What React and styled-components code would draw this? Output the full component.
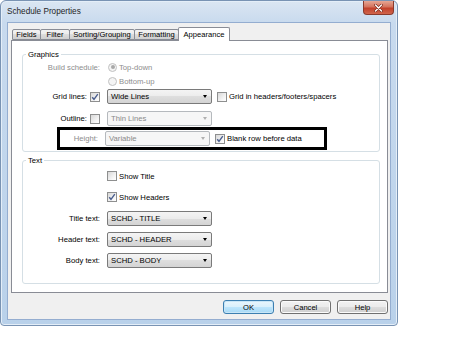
import React from 'react';
import styled, { createGlobalStyle } from 'styled-components';

const GlobalStyle = createGlobalStyle`
  html, body { margin: 0; padding: 0; background: #fff; }
  body {
    font-family: "Liberation Sans", Arial, sans-serif;
    font-size: 7.7px;
    color: #000;
  }
`;

const Window = styled.div`
  width: 398px;
  height: 326px;
  box-sizing: border-box;
  border: 1px solid #7993b3;
  border-radius: 6px 6px 4px 4px;
  background: linear-gradient(#dbe6f2, #c8daee 22px, #b9d1ea);
  box-shadow: inset 0 0 0 1px #e4eef8;
  display: flex;
  flex-direction: column;
  padding: 0 6px 5px 6px;
`;

const TitleBar = styled.div`
  height: 21px;
  display: flex;
  align-items: flex-start;
  justify-content: space-between;
`;

const Title = styled.span`
  font-size: 8.2px;
  line-height: 21px;
  color: #1e1e1e;
`;

const CloseButton = styled.div`
  width: 31px;
  height: 14px;
  margin-right: -3px;
  box-sizing: border-box;
  border: 1px solid #8a3a2c;
  border-top: none;
  border-radius: 0 0 4px 4px;
  background: linear-gradient(#e6a795, #d4735d 45%, #c2412b 55%, #d0654c);
  display: flex;
  align-items: center;
  justify-content: center;
`;

const Client = styled.div`
  flex: 1;
  background: #f0f0f0;
  border: 1px solid #94add0;
  display: flex;
  flex-direction: column;
  padding: 4px 2px 0 3px;
`;

const TabStrip = styled.div`
  display: flex;
  align-items: flex-end;
  padding-left: 1px;
  height: 13px;
  position: relative;
  z-index: 1;
`;

const Tab = styled.div`
  width: ${p => p.$w}px;
  height: ${p => (p.$active ? 14 : 11)}px;
  box-sizing: border-box;
  border: 1px solid #898c95;
  border-bottom: ${p => (p.$active ? 'none' : '1px solid #898c95')};
  border-radius: 2px 2px 0 0;
  margin-right: -1px;
  margin-bottom: ${p => (p.$active ? -1 : 0)}px;
  background: ${p => (p.$active ? '#fff' : 'linear-gradient(#f2f2f2, #ebebeb 50%, #dddddd 50%, #cfcfcf)')};
  display: flex;
  align-items: center;
  justify-content: center;
  font-size: 7.6px;
`;

const Panel = styled.div`
  height: 253px;
  box-sizing: border-box;
  background: #fff;
  border: 1px solid #898c95;
  padding: 9px 7px 0 10px;
`;

const Group = styled.fieldset`
  margin: ${p => p.$mt || 0}px 0 0 0;
  padding: 0 0 ${p => p.$pb}px 0;
  min-width: 0;
  border: 1px solid #d5dfe5;
  border-radius: 3px;
`;

const Legend = styled.legend`
  margin-left: 3px;
  padding: 0 2px;
  line-height: 9px;
  color: #000;
`;

const Row = styled.div`
  display: flex;
  align-items: center;
  height: ${p => p.$h || 17}px;
  margin-top: ${p => p.$mt || 0}px;
  gap: 5px;
`;

const Label = styled.div`
  width: ${p => p.$w || 77}px;
  margin-right: 2px;
  display: flex;
  justify-content: flex-end;
  align-items: center;
  gap: 3px;
  white-space: nowrap;
  color: ${p => (p.$disabled ? '#8d8d8d' : '#000')};
`;

const Highlight = styled.div`
  margin-left: 34px;
  width: 270px;
  box-sizing: border-box;
  border: 3px solid #000;
`;

const OptionText = styled.span`
  white-space: nowrap;
  color: ${p => (p.$disabled ? '#8d8d8d' : '#000')};
`;

const Option = styled.label`
  display: flex;
  align-items: center;
  gap: 2px;
  margin-left: ${p => p.$ml || 0}px;
`;

const Combo = styled.div`
  width: 105px;
  height: 15px;
  box-sizing: border-box;
  border: 1px solid ${p => (p.$disabled ? '#b5b9bd' : '#7a7a7a')};
  border-radius: 2px;
  background: ${p => (p.$disabled ? '#f6f6f6' : 'linear-gradient(#f4f4f4, #ececec 50%, #dedede 50%, #d4d4d4)')};
  display: flex;
  align-items: center;
  justify-content: space-between;
  padding: 0 4px 0 3px;
  color: ${p => (p.$disabled ? '#8a8a8a' : '#000')};
`;

const Arrow = styled.span`
  width: 0;
  height: 0;
  border-left: 2.5px solid transparent;
  border-right: 2.5px solid transparent;
  border-top: 3px solid ${p => (p.$disabled ? '#b0b0b0' : '#000')};
`;

const Box = styled.span`
  width: 10px;
  height: 10px;
  box-sizing: border-box;
  border: 1px solid #8e8f8f;
  background: linear-gradient(135deg, #d8d8d8, #f6f6f6 70%, #fff);
  display: inline-flex;
  align-items: center;
  justify-content: center;
  flex: none;
`;

const Radio = styled.span`
  width: 9px;
  height: 9px;
  box-sizing: border-box;
  border-radius: 50%;
  border: 1px solid #c1c1c1;
  background: #f4f4f4;
  display: inline-flex;
  align-items: center;
  justify-content: center;
  flex: none;
  &::after {
    content: '';
    width: 4px;
    height: 4px;
    border-radius: 50%;
    background: ${p => (p.$on ? '#a8a8a8' : 'transparent')};
  }
`;

const ButtonRow = styled.div`
  display: flex;
  justify-content: flex-end;
  gap: 6px;
  margin-top: 7px;
`;

const Button = styled.div`
  width: 51px;
  height: 14px;
  box-sizing: border-box;
  border: 1px solid ${p => (p.$default ? '#3c7fb1' : '#707070')};
  border-radius: 3px;
  background: ${p => (p.$default
    ? 'linear-gradient(#eaf6fd, #d9f0fc 50%, #bee6fd 50%, #a7d9f5)'
    : 'linear-gradient(#f2f2f2, #ebebeb 50%, #dddddd 50%, #cfcfcf)')};
  box-shadow: ${p => (p.$default ? 'inset 0 0 0 1px #c8e6f7' : 'inset 0 0 0 1px #fbfbfb')};
  display: flex;
  align-items: center;
  justify-content: center;
  font-size: 7.6px;
`;

function Check({ on }) {
  return (
    <Box>
      {on && (
        <svg width="8" height="8" viewBox="0 0 8 8">
          <path d="M1.2 4.2 L3 6.3 L6.8 1.2" fill="none" stroke="#4a5e8e" strokeWidth="1.4" />
        </svg>
      )}
    </Box>
  );
}

function Select({ value, disabled }) {
  return (
    <Combo $disabled={disabled}>
      <span>{value}</span>
      <Arrow $disabled={disabled} />
    </Combo>
  );
}

export default function App() {
  const tabs = [
    { name: 'Fields', w: 29 },
    { name: 'Filter', w: 30 },
    { name: 'Sorting/Grouping', w: 66 },
    { name: 'Formatting', w: 45 },
    { name: 'Appearance', w: 52, active: true },
  ];

  return (
    <>
      <GlobalStyle />
      <Window>
        <TitleBar>
          <Title>Schedule Properties</Title>
          <CloseButton>
            <svg width="9" height="8" viewBox="0 0 9 8">
              <path d="M1.5 1 L7.5 7 M7.5 1 L1.5 7" stroke="#7a2a1c" strokeWidth="2.6" strokeLinecap="round" />
              <path d="M1.5 1 L7.5 7 M7.5 1 L1.5 7" stroke="#fff" strokeWidth="1.4" strokeLinecap="round" />
            </svg>
          </CloseButton>
        </TitleBar>

        <Client>
          <TabStrip>
            {tabs.map(t => (
              <Tab key={t.name} $w={t.w} $active={t.active}>{t.name}</Tab>
            ))}
          </TabStrip>

          <Panel>
            <Group $pb={1}>
              <Legend>Graphics</Legend>
              <Row $h={14} style={{ marginTop: 1 }}>
                <Label $disabled>Build schedule:</Label>
                <Option $ml={1}><Radio $on /><OptionText $disabled>Top-down</OptionText></Option>
              </Row>
              <Row $h={14}>
                <Label />
                <Option $ml={1}><Radio /><OptionText $disabled>Bottom-up</OptionText></Option>
              </Row>
              <Row>
                <Label>Grid lines: <Check on /></Label>
                <Select value="Wide Lines" />
                <Option><Check /><OptionText>Grid in headers/footers/spacers</OptionText></Option>
              </Row>
              <Row $mt={5}>
                <Label>Outline: <Check /></Label>
                <Select value="Thin Lines" disabled />
              </Row>
              <Highlight>
                <Row>
                  <Label $w={38} $disabled>Height:</Label>
                  <Select value="Variable" disabled />
                  <Option><Check on /><OptionText>Blank row before data</OptionText></Option>
                </Row>
              </Highlight>
            </Group>

            <Group $mt={4} $pb={14}>
              <Legend>Text</Legend>
              <Row $h={14} $mt={4}>
                <Label />
                <Option><Check /><OptionText>Show Title</OptionText></Option>
              </Row>
              <Row $h={14} $mt={7}>
                <Label />
                <Option><Check on /><OptionText>Show Headers</OptionText></Option>
              </Row>
              <Row $mt={6}>
                <Label>Title text:</Label>
                <Select value="SCHD - TITLE" />
              </Row>
              <Row $mt={4}>
                <Label>Header text:</Label>
                <Select value="SCHD - HEADER" />
              </Row>
              <Row $mt={4}>
                <Label>Body text:</Label>
                <Select value="SCHD - BODY" />
              </Row>
            </Group>
          </Panel>

          <ButtonRow>
            <Button $default>OK</Button>
            <Button>Cancel</Button>
            <Button>Help</Button>
          </ButtonRow>
        </Client>
      </Window>
    </>
  );
}
